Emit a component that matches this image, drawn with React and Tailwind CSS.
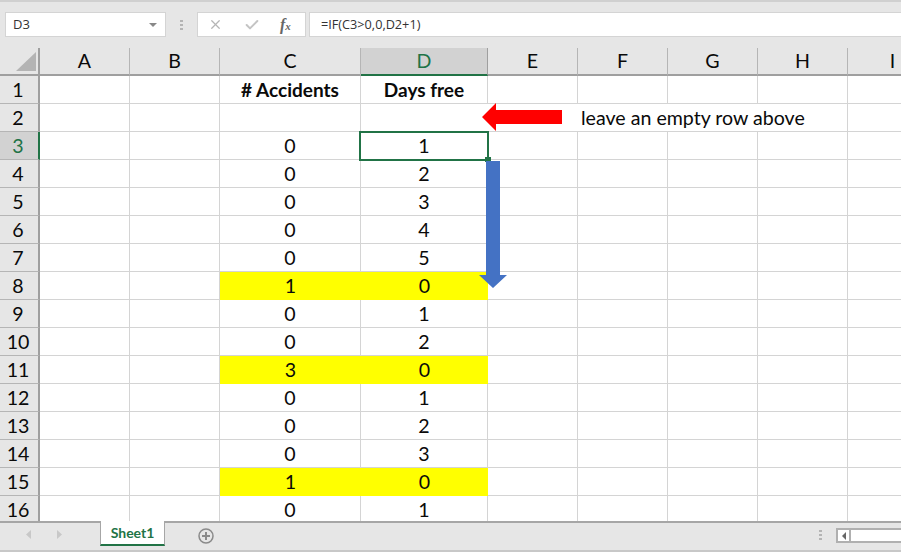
import React from 'react';
import { X, Check } from 'lucide-react';

const columns = ['A', 'B', 'C', 'D', 'E', 'F', 'G', 'H', 'I'];

// row number, accidents, days free, highlighted
const rows = [
  [3, 0, 1], [4, 0, 2], [5, 0, 3], [6, 0, 4], [7, 0, 5], [8, 1, 0, true], [9, 0, 1],
  [10, 0, 2], [11, 3, 0, true], [12, 0, 1], [13, 0, 2], [14, 0, 3], [15, 1, 0, true], [16, 0, 1],
];

const gridCols = 'grid grid-cols-[40px_90px_90px_141px_127px_90px_90px_90px_90px_90px] grid-rows-[28px] w-[938px]';

function Cell({ children, yellow, bold, last }) {
  return (
    <div
      className={`flex items-center justify-center h-[28px] ${bold ? 'font-bold text-[19px]' : ''} ${
        yellow ? 'bg-[#ffff00]' : `${last ? '' : 'border-b'} border-r border-[#d4d4d4]`
      }`}
    >
      {children}
    </div>
  );
}

function RowHeader({ n, active, last }) {
  return (
    <div
      className={`flex items-center justify-center h-[28px] pr-0.5 ${last ? '' : 'border-b'} border-r-2 ${
        active
          ? 'bg-[#d2d2d2] text-[#217346] border-r-[#217346] border-b-[#b5b5b5]'
          : 'bg-[#e6e6e6] border-r-[#9f9f9f] border-b-[#b5b5b5]'
      }`}
    >
      {n}
    </div>
  );
}

function BlankCells({ count, last }) {
  return Array.from({ length: count }).map((_, i) => <Cell key={i} last={last} />);
}

export default function App() {
  return (
    <div className="w-[901px] h-[552px] overflow-hidden bg-[#e6e6e6] text-[#0a0a0a] font-['Lato','Liberation_Sans',sans-serif] text-[19.6px] leading-none flex flex-col">
      {/* Formula bar */}
      <div className="h-[48px] shrink-0 border-t-2 border-[#d0d0d0] flex items-start pt-[10px] pl-[5px] text-[13px] font-['Open_Sans','Liberation_Sans',sans-serif]">
        <div className="w-[161px] h-[25px] bg-white border border-[#d4d4d4] flex items-center justify-between pl-[7px] pr-[8px]">
          <span className="text-[#333]">D3</span>
          <span className="w-0 h-0 border-l-[4px] border-r-[4px] border-t-[4px] border-l-transparent border-r-transparent border-t-[#888]" />
        </div>
        <div className="w-[31px] h-[25px] flex flex-col items-center justify-center gap-[2px]">
          <span className="w-[3px] h-[2px] bg-[#b4b4b4]" />
          <span className="w-[3px] h-[2px] bg-[#b4b4b4]" />
          <span className="w-[3px] h-[2px] bg-[#b4b4b4]" />
        </div>
        <div className="w-[109px] h-[25px] bg-white border border-[#d4d4d4] flex items-center text-[#b5b5b5]">
          <X size={15} strokeWidth={2} className="ml-[10px]" />
          <Check size={16} strokeWidth={3} className="ml-[21px] text-[#c4c4c4]" />
          <span className="ml-[20px] italic font-bold text-[16px] text-[#666] font-['Liberation_Serif',serif]">
            f<span className="text-[11px]">x</span>
          </span>
        </div>
        <div className="ml-[3px] flex-1 h-[25px] bg-white border border-[#d4d4d4] border-r-0 flex items-center pl-[11px] text-[#333] text-[12.7px]">
          =IF(C3&gt;0,0,D2+1)
        </div>
      </div>

      {/* Sheet */}
      <div className="relative flex-1 min-h-0 bg-white overflow-hidden">
        {/* Column headers */}
        <div className={`${gridCols} bg-[#e6e6e6]`}>
          <div className="relative h-[28px] border-r-2 border-b-2 border-r-[#9f9f9f] border-b-[#9f9f9f]">
            <svg className="absolute left-[16px] top-[4px]" width="21" height="20" viewBox="0 0 21 20">
              <path d="M20 0 V19 H0 Z" fill="#b4b4b4" />
            </svg>
          </div>
          {columns.map((c) => (
            <div
              key={c}
              className={`flex items-center justify-center h-[28px] border-b-2 ${
                c === 'D'
                  ? 'bg-[#d2d2d2] text-[#217346] border-b-[#217346] border-r border-r-[#9f9f9f]'
                  : 'border-b-[#9f9f9f] border-r border-r-[#b5b5b5]'
              }`}
            >
              {c}
            </div>
          ))}
        </div>

        {/* Row 1 */}
        <div className={gridCols}>
          <RowHeader n={1} />
          <BlankCells count={2} />
          <Cell bold>{'# Accidents'}</Cell>
          <Cell bold>Days free</Cell>
          <BlankCells count={5} />
        </div>

        {/* Row 2, the note runs over the cell lines from D to H */}
        <div className={gridCols}>
          <RowHeader n={2} />
          <BlankCells count={3} />
          <div className="border-b border-[#d4d4d4]" />
          <div className="border-b border-[#d4d4d4]" />
          <div className="flex items-center h-[28px] border-b border-[#d4d4d4] pl-[3px] whitespace-nowrap">
            leave an empty row above
          </div>
          <div className="border-b border-[#d4d4d4]" />
          <div className="border-b border-r border-[#d4d4d4]" />
          <BlankCells count={1} />
        </div>

        {rows.map(([n, accidents, days, yellow]) => (
          <div key={n} className={gridCols}>
            <RowHeader n={n} active={n === 3} last={n === 16} />
            <BlankCells count={2} last={n === 16} />
            <Cell yellow={yellow} last={n === 16}>{accidents}</Cell>
            <Cell yellow={yellow} last={n === 16}>{days}</Cell>
            <BlankCells count={5} last={n === 16} />
          </div>
        ))}

        {/* Selection box */}
        <div className="absolute left-[359px] top-[83px] w-[130px] h-[30px] border-2 border-[#217346] pointer-events-none" />
        <div className="absolute left-[485px] top-[109px] w-[6px] h-[5px] bg-[#217346]" />

        {/* Red arrow */}
        <svg className="absolute left-[482px] top-[55px]" width="81" height="28" viewBox="0 0 81 28">
          <path d="M0 14 L14 0 V7 H80 V21 H14 V28 Z" fill="#ff0000" />
        </svg>

        {/* Blue arrow */}
        <svg className="absolute left-[479px] top-[113px]" width="28" height="128" viewBox="0 0 28 128">
          <path d="M7 0 H21 V114 H28 L14 127 L0 114 H7 Z" fill="#4472c4" />
        </svg>
      </div>

      {/* Tab bar */}
      <div className="h-[29px] shrink-0 border-t-2 border-[#a6a6a6] flex items-start relative">
        <svg className="ml-[26px] mt-[7px]" width="36" height="10" viewBox="0 0 36 10">
          <path d="M5 0 V9 L0 4.5 Z" fill="#c8c8c8" />
          <path d="M31 0 V9 L36 4.5 Z" fill="#c8c8c8" />
        </svg>
        <div className="ml-[38px] -mt-[2px] w-[65px] h-[25px] bg-white border-l border-r border-[#a6a6a6] border-b-2 border-b-[#217346] flex items-center justify-center font-bold text-[14px] text-[#217346]">
          Sheet1
        </div>
        <svg className="ml-[33px] mt-[5px]" width="16" height="16" viewBox="0 0 16 16">
          <circle cx="8" cy="8" r="7" fill="none" stroke="#8a8a8a" strokeWidth="1.5" />
          <path d="M8 4 V12 M4 8 H12" stroke="#8a8a8a" strokeWidth="2" />
        </svg>
        <div className="absolute left-[819px] top-[7px] flex flex-col gap-[2px]">
          <span className="w-[3px] h-[2px] bg-[#b4b4b4]" />
          <span className="w-[3px] h-[2px] bg-[#b4b4b4]" />
          <span className="w-[3px] h-[2px] bg-[#b4b4b4]" />
        </div>
        <div className="absolute left-[836px] top-[5px] w-[65px] h-[15px] bg-white border-2 border-r-0 border-[#b0b0b0] flex items-center">
          <div className="w-[13px] h-full border-r-2 border-[#b0b0b0] flex items-center justify-center">
            <span className="w-0 h-0 border-t-[4px] border-b-[4px] border-r-[4px] border-t-transparent border-b-transparent border-r-[#666]" />
          </div>
        </div>
      </div>
      <div className="h-[2px] shrink-0 bg-[#c8c8c8]" />
    </div>
  );
}
